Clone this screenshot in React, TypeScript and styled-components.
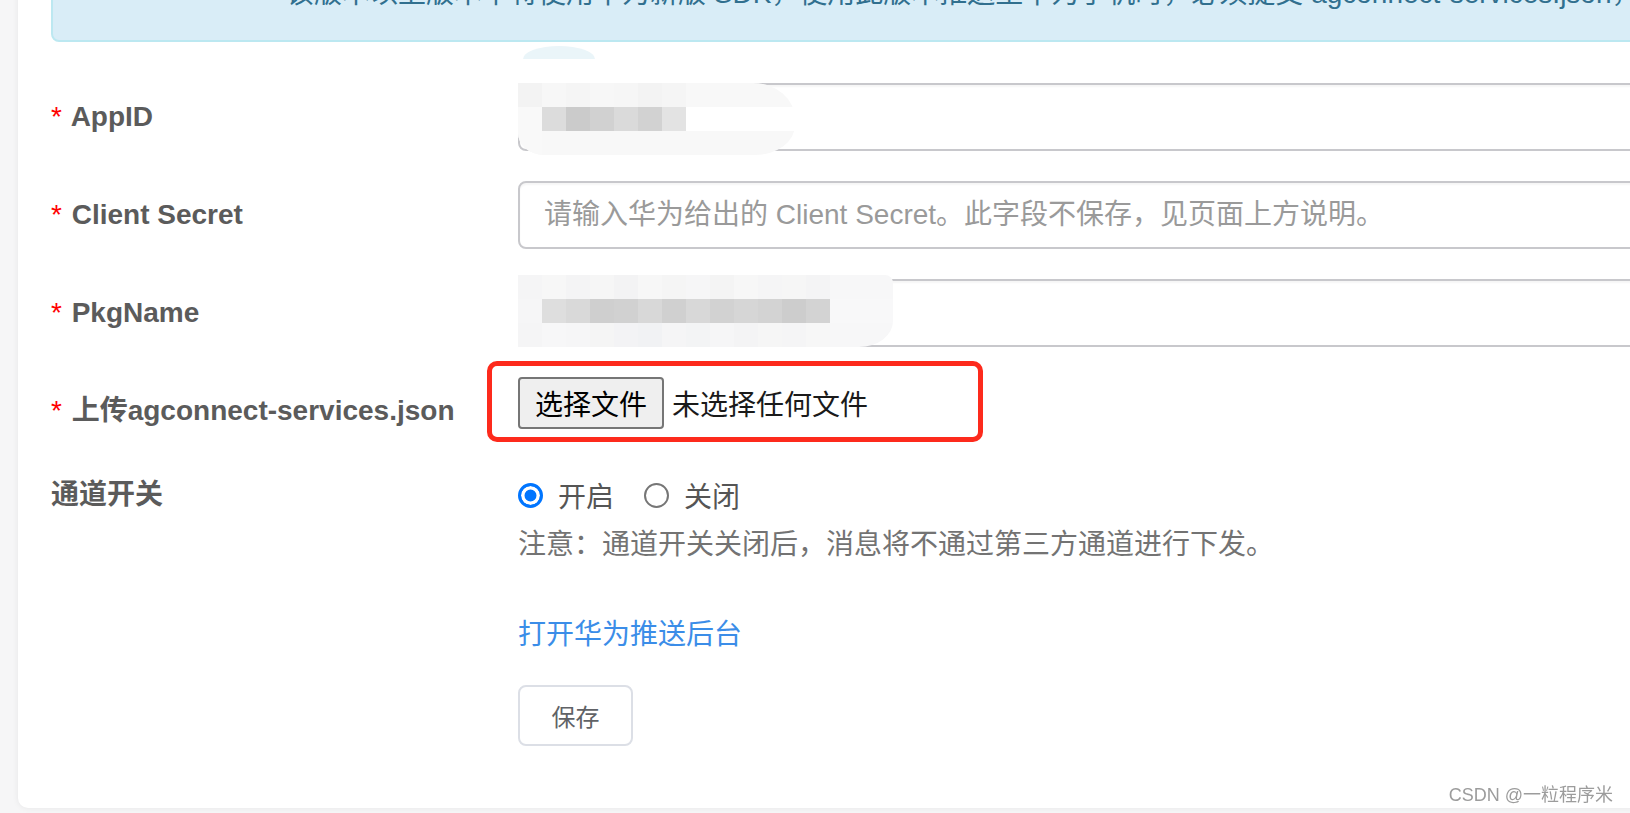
import React from "react";
import styled, { createGlobalStyle } from "styled-components";

const GlobalStyle = createGlobalStyle`
  html, body {
    margin: 0;
    padding: 0;
    background: #f6f6f7;
    overflow: hidden;
  }
  body {
    font-family: "Liberation Sans", "Noto Sans CJK SC", sans-serif;
  }
  #root {
    height: 813px;
    overflow: hidden;
  }
`;

/* the page is shown scrolled down: the top of the card lies above the window */
const Page = styled.div`
  padding-left: 18px;
  margin-top: -88px;
`;

const Card = styled.div`
  width: 1700px;
  box-sizing: border-box;
  background: #fff;
  border-radius: 10px;
  box-shadow: 0 0 6px rgba(0, 0, 0, 0.07);
  padding: 30px 33px 62px;
`;

const Alert = styled.div`
  background: #d9edf7;
  border: 2px solid #bce8f1;
  border-radius: 8px;
  color: #31708f;
  font-size: 28px;
  line-height: 40px;
  padding: 30px 30px 26px 233px;
  margin-bottom: 41px;
  white-space: nowrap;
  overflow: hidden;
`;

const FormRow = styled.div`
  display: grid;
  grid-template-columns: 467px 1fr;
  align-items: start;
  margin-bottom: 30px;
  &:last-child {
    margin-bottom: 0;
  }
`;

const Label = styled.label`
  padding-top: 14px;
  line-height: 40px;
  font-size: 28px;
  font-weight: bold;
  color: #5b5b5b;
  white-space: nowrap;
`;

const Star = styled.span`
  color: #ff0000;
  font-weight: normal;
  margin-right: 2px;
`;

const Field = styled.div`
  position: relative;
`;

const TextInput = styled.input`
  display: block;
  width: 100%;
  height: 68px;
  box-sizing: border-box;
  border: 2px solid #c8c8cc;
  border-radius: 8px;
  padding: 0 24px;
  font-size: 28px;
  font-family: inherit;
  color: #555;
  background: #fff;
  box-shadow: inset 0 2px 2px rgba(0, 0, 0, 0.04);
  outline: none;
  &::placeholder {
    color: #9a9a9a;
  }
`;

/* privacy mosaic painted over the screenshot */
const Mosaic = styled.div<{ $top: number; $width: number; $radius: string }>`
  position: absolute;
  left: 0;
  top: ${(p) => p.$top}px;
  width: ${(p) => p.$width}px;
  height: 72px;
  display: flex;
  flex-direction: column;
  overflow: hidden;
  border-radius: ${(p) => p.$radius};
  pointer-events: none;
`;

const MosaicRow = styled.div<{ $fill: string }>`
  display: flex;
  height: 24px;
  background: ${(p) => p.$fill};
`;

const Cell = styled.div<{ $color: string }>`
  width: 24px;
  height: 24px;
  flex: none;
  background: ${(p) => p.$color};
`;

const Bump = styled.div`
  position: absolute;
  left: 5px;
  top: -37px;
  width: 72px;
  height: 13px;
  background: #eaf5f9;
  border-radius: 36px 36px 0 0 / 13px 13px 0 0;
  pointer-events: none;
`;

const FileField = styled.div`
  position: relative;
  display: flex;
  align-items: center;
  height: 52px;
`;

const FileButton = styled.button`
  height: 52px;
  box-sizing: border-box;
  padding: 0 15px;
  background: #efefef;
  border: 2px solid #767676;
  border-radius: 4px;
  font-size: 28px;
  font-family: "Noto Sans CJK SC", sans-serif;
  color: #000;
  line-height: 48px;
`;

const FileName = styled.span`
  margin-left: 8px;
  font-size: 28px;
  font-family: "Noto Sans CJK SC", sans-serif;
  color: #1a1a1a;
`;

const Highlight = styled.div`
  position: absolute;
  left: -31px;
  top: -16px;
  width: 496px;
  height: 81px;
  box-sizing: border-box;
  border: 5px solid #fd2a1c;
  border-radius: 10px;
  pointer-events: none;
`;

const RadioGroup = styled.div`
  display: flex;
  align-items: center;
  gap: 30px;
  padding-top: 14px;
  height: 40px;
`;

const RadioOption = styled.label`
  display: flex;
  align-items: center;
  gap: 15px;
  font-size: 28px;
  line-height: 40px;
  color: #555;
  font-family: "Noto Sans CJK SC", sans-serif;
`;

const Radio = styled.input`
  appearance: none;
  margin: 0;
  width: 25px;
  height: 25px;
  box-sizing: border-box;
  border-radius: 50%;
  border: 2px solid #767676;
  background: #fff;
  &:checked {
    border: 3px solid #0075ff;
    background: #0075ff;
    box-shadow: inset 0 0 0 3.5px #fff;
  }
`;

const HelpText = styled.p`
  margin: 10px 0 20px;
  font-size: 28px;
  line-height: 40px;
  color: #737373;
  white-space: nowrap;
`;

const Link = styled.a`
  display: block;
  font-size: 28px;
  line-height: 40px;
  color: #3b8de8;
  text-decoration: none;
  white-space: nowrap;
`;

const SaveButton = styled.button`
  width: 115px;
  height: 61px;
  box-sizing: border-box;
  border: 2px solid #dcdfe6;
  border-radius: 8px;
  background: #fff;
  font-size: 24px;
  font-family: "Noto Sans CJK SC", sans-serif;
  color: #606266;
`;

const Watermark = styled.div`
  position: fixed;
  right: 17px;
  bottom: 5px;
  font-size: 18px;
  line-height: 26px;
  color: #9c9c9c;
  text-shadow: 0 0 2px #fff;
  pointer-events: none;
`;

const appIdRows = [
  {
    fill: "#f8f8f8",
    cells: ["#f3f3f3", "#f7f7f7", "#f5f5f5", "#f7f7f7", "#f6f6f6", "#f3f3f3", "#f5f5f5"],
  },
  {
    fill: "#ffffff",
    cells: ["#f9f9f9", "#dcdcdc", "#cbcbcb", "#d1d1d1", "#dadada", "#d2d2d2", "#e3e3e3"],
  },
  {
    fill: "#f8f8f8",
    cells: ["#f9f9f9", "#f8f8f8"],
  },
];

const pkgRows = [
  {
    fill: "#f7f7f8",
    cells: ["#f5f5f6", "#f7f7f7", "#f4f4f5", "#f6f6f6", "#f3f3f4", "#f7f7f7", "#f5f5f5", "#f6f6f7", "#f4f4f4", "#f7f7f7", "#f5f5f6", "#f6f6f6", "#f4f4f5"],
  },
  {
    fill: "#f8f8f9",
    cells: ["#f6f6f7", "#dedede", "#d9d9d9", "#cfcfcf", "#d1d1d1", "#d8d8d8", "#d0d0d0", "#d8d8d8", "#d2d2d2", "#d6d6d6", "#d3d3d3", "#cdcdcd", "#d3d3d3"],
  },
  {
    fill: "#f7f7f8",
    cells: ["#f5f5f6", "#f7f7f8", "#f6f6f7", "#f5f5f5", "#f3f3f5", "#f1f2f4", "#f5f5f6", "#f3f4f5", "#f6f6f7", "#f4f4f5", "#f6f6f6", "#f5f5f6", "#f7f7f7"],
  },
];

type MosaicRowData = { fill: string; cells: string[] };

function MosaicBlock({
  rows,
  top,
  width,
  radius,
}: {
  rows: MosaicRowData[];
  top: number;
  width: number;
  radius: string;
}) {
  return (
    <Mosaic $top={top} $width={width} $radius={radius}>
      {rows.map((row, i) => (
        <MosaicRow key={i} $fill={row.fill}>
          {row.cells.map((c, j) => (
            <Cell key={j} $color={c} />
          ))}
        </MosaicRow>
      ))}
    </Mosaic>
  );
}

export default function App() {
  return (
    <>
      <GlobalStyle />
      <Page>
        <Card>
          <Alert>
            该版本以上版本中将使用华为新版 SDK，使用此版本推送至华为手机时，必须提交 agconnect-services.json，否则无法推送消息。
          </Alert>

          <FormRow>
            <Label>
              <Star>*</Star> AppID
            </Label>
            <Field>
              <Bump />
              <TextInput type="text" defaultValue="" />
              <MosaicBlock rows={appIdRows} top={0} width={277} radius="0 42px 40px 26px / 0 36px 30px 22px" />
            </Field>
          </FormRow>

          <FormRow>
            <Label>
              <Star>*</Star> Client Secret
            </Label>
            <Field>
              <TextInput
                type="text"
                placeholder="请输入华为给出的 Client Secret。此字段不保存，见页面上方说明。"
              />
            </Field>
          </FormRow>

          <FormRow>
            <Label>
              <Star>*</Star> PkgName
            </Label>
            <Field>
              <TextInput type="text" defaultValue="" />
              <MosaicBlock rows={pkgRows} top={-4} width={375} radius="0 8px 34px 0 / 0 8px 26px 0" />
            </Field>
          </FormRow>

          <FormRow>
            <Label>
              <Star>*</Star> 上传agconnect-services.json
            </Label>
            <FileField>
              <FileButton type="button">选择文件</FileButton>
              <FileName>未选择任何文件</FileName>
              <Highlight />
            </FileField>
          </FormRow>

          <FormRow>
            <Label>通道开关</Label>
            <div>
              <RadioGroup>
                <RadioOption>
                  <Radio type="radio" name="channel" defaultChecked />
                  开启
                </RadioOption>
                <RadioOption>
                  <Radio type="radio" name="channel" />
                  关闭
                </RadioOption>
              </RadioGroup>
              <HelpText>注意：通道开关关闭后，消息将不通过第三方通道进行下发。</HelpText>
            </div>
          </FormRow>

          <FormRow>
            <div />
            <Link href="#">打开华为推送后台</Link>
          </FormRow>

          <FormRow>
            <div />
            <div>
              <SaveButton type="button">保存</SaveButton>
            </div>
          </FormRow>
        </Card>
      </Page>
      <Watermark>CSDN @一粒程序米</Watermark>
    </>
  );
}
